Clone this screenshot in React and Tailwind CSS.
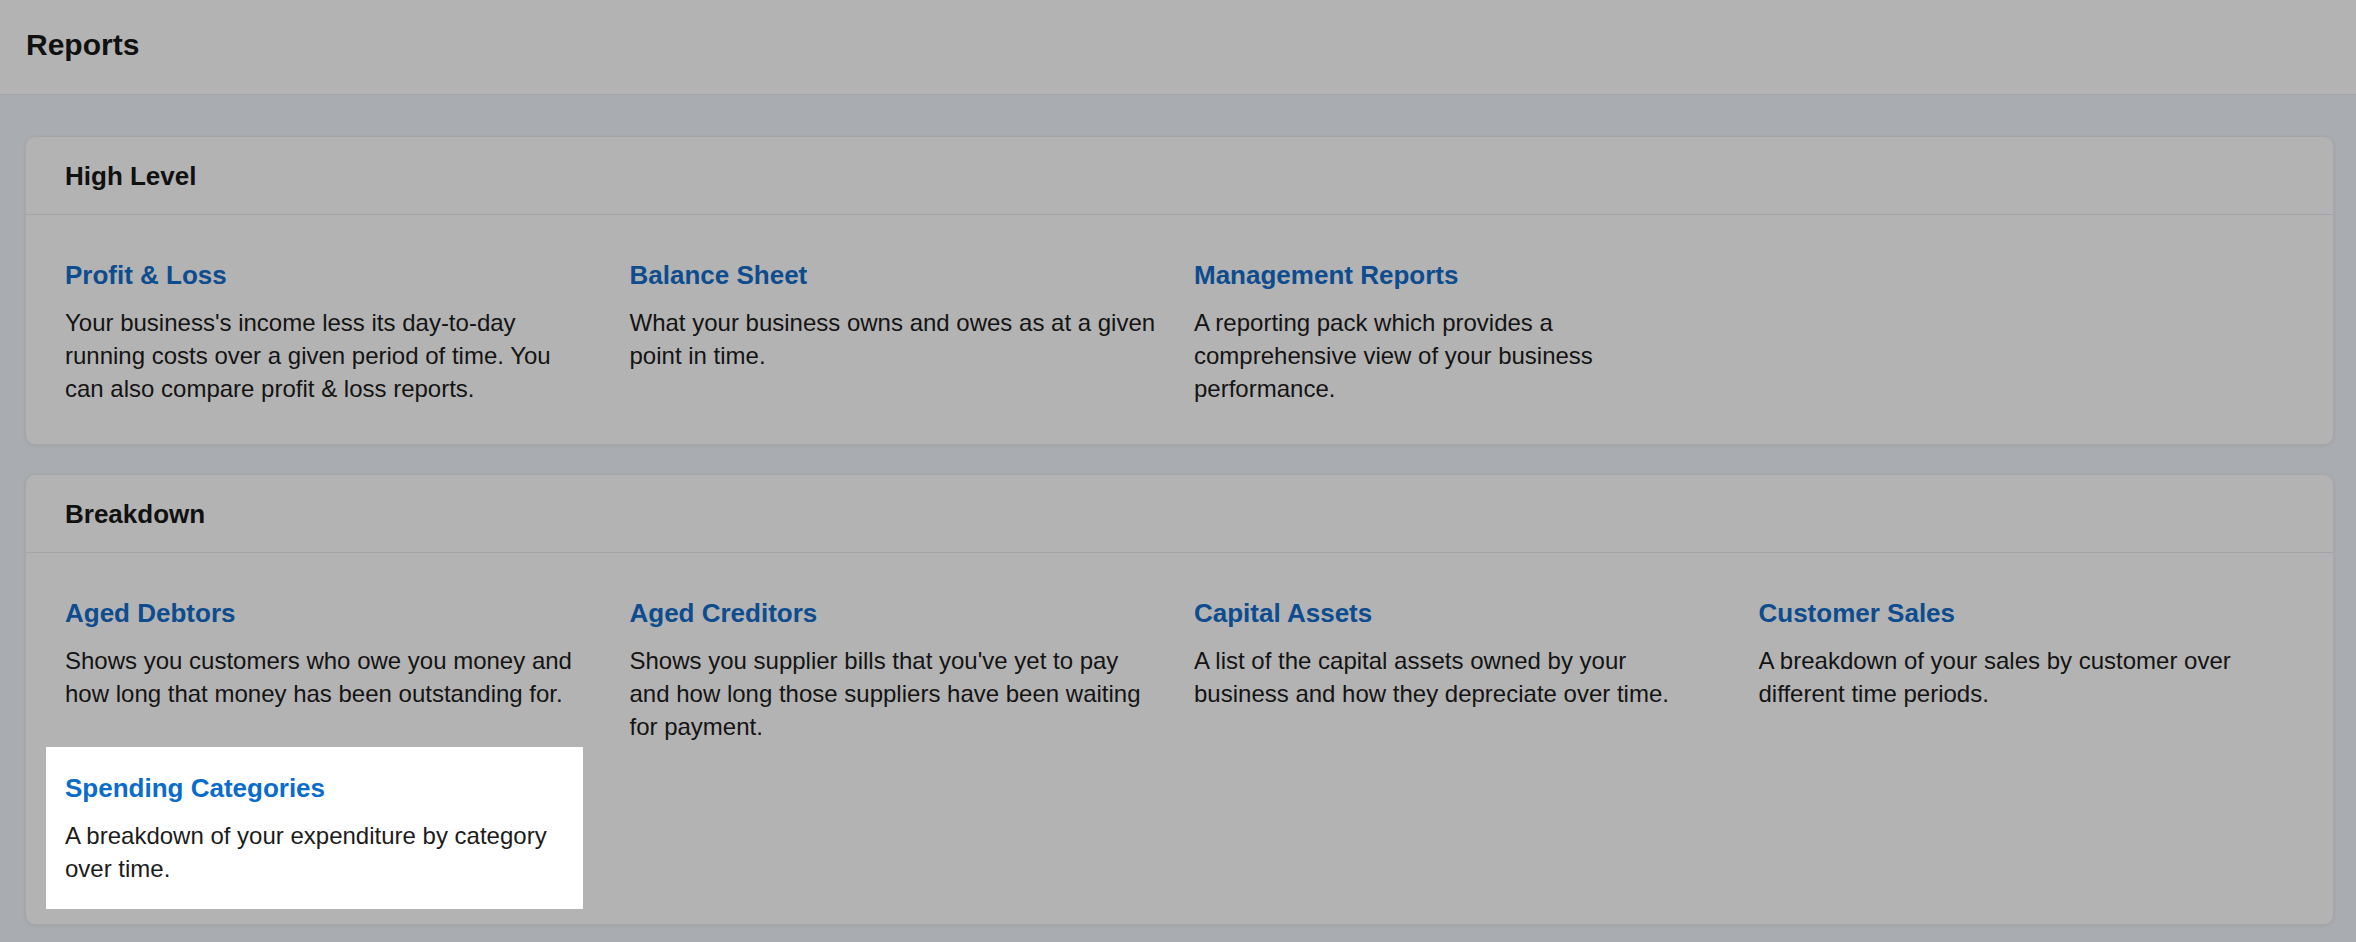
import React from 'react';

const sections = [
  {
    title: 'High Level',
    items: [
      {
        name: 'Profit & Loss',
        text: "Your business's income less its day-to-day running costs over a given period of time. You can also compare profit & loss reports.",
      },
      {
        name: 'Balance Sheet',
        text: 'What your business owns and owes as at a given point in time.',
      },
      {
        name: 'Management Reports',
        text: 'A reporting pack which provides a comprehensive view of your business performance.',
      },
    ],
  },
  {
    title: 'Breakdown',
    items: [
      {
        name: 'Aged Debtors',
        text: 'Shows you customers who owe you money and how long that money has been outstanding for.',
      },
      {
        name: 'Aged Creditors',
        text: "Shows you supplier bills that you've yet to pay and how long those suppliers have been waiting for payment.",
      },
      {
        name: 'Capital Assets',
        text: 'A list of the capital assets owned by your business and how they depreciate over time.',
      },
      {
        name: 'Customer Sales',
        text: 'A breakdown of your sales by customer over different time periods.',
      },
      {
        name: 'Spending Categories',
        text: 'A breakdown of your expenditure by category over time.',
        highlighted: true,
      },
    ],
  },
];

function ReportItem({ item }) {
  if (item.highlighted) {
    // spotlighted by the product tour, sits above the dimmed page
    return (
      <div className="-ml-[19px] -mt-[25px] -mb-[24px] w-[537px] bg-white pl-[19px] pt-[25px] pb-[24px]">
        <a href="#" className="block text-[26px] font-bold leading-[33px] text-[#0a6ccb]">
          {item.name}
        </a>
        <p className="mt-[14px] text-[24px] leading-[33px] text-[#1c1c1c]">{item.text}</p>
      </div>
    );
  }

  return (
    <div>
      <a href="#" className="block text-[26px] font-bold leading-[33px] text-[#0d4c8e]">
        {item.name}
      </a>
      <p className="mt-[14px] text-[24px] leading-[33px] text-[#141414]">{item.text}</p>
    </div>
  );
}

function ReportSection({ section }) {
  return (
    <section className="rounded-[10px] border border-[#a4a6a9] bg-[#b3b3b3] shadow-[0_1px_4px_rgba(0,0,0,0.06)]">
      <div className="h-[78px] border-b border-[#a3a4a6] px-[39px] pt-[24px]">
        <h2 className="text-[26px] font-bold leading-[30px] text-[#111111]">{section.title}</h2>
      </div>
      <div className="grid grid-cols-[repeat(4,527px)] gap-x-[37.5px] gap-y-[29px] pt-[44px] pb-[39px] pl-[39px]">
        {section.items.map((item) => (
          <ReportItem key={item.name} item={item} />
        ))}
      </div>
    </section>
  );
}

export default function App() {
  return (
    <div className="min-h-screen bg-[#a9acb0] font-['Liberation_Sans',Arial,sans-serif]">
      <header className="h-[95px] border-b border-[#a5a7aa] bg-[#b3b3b3] pl-[26px] pt-[28px]">
        <h1 className="text-[30px] font-bold leading-[34px] text-[#111111]">Reports</h1>
      </header>

      <main className="flex flex-col gap-[29px] pt-[41px] pb-[16px] pl-[25px] pr-[22px]">
        {sections.map((section) => (
          <ReportSection key={section.title} section={section} />
        ))}
      </main>
    </div>
  );
}
